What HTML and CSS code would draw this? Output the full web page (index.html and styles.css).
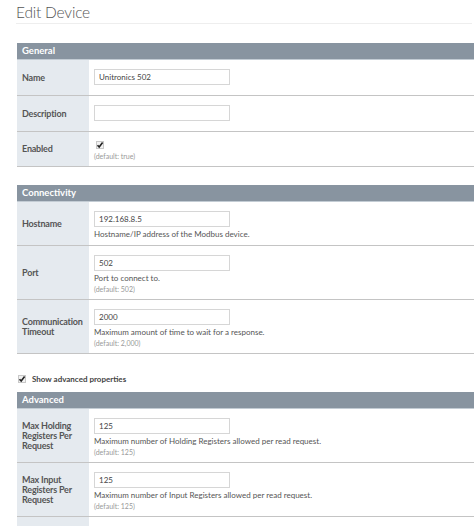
FILE: index.html
```html
<!DOCTYPE html>
<html>
<head>
<meta charset="utf-8">
<link rel="stylesheet" href="styles.css">
</head>
<body>
<div class="page">
  <h1 class="title">Edit Device</h1>

  <div class="section first">
    <div class="sec-head">General</div>
    <div class="row">
      <div class="label">Name</div>
      <div class="field"><div class="input">Unitronics 502</div></div>
    </div>
    <div class="row">
      <div class="label">Description</div>
      <div class="field"><div class="input"></div></div>
    </div>
    <div class="row short">
      <div class="label">Enabled</div>
      <div class="field">
        <span class="cb"><svg viewBox="0 0 8 8" width="8" height="8"><path d="M1.5 4.2 L3.2 6 L6.6 1.6" fill="none" stroke="#222" stroke-width="1.6"/></svg></span>
        <div class="default">(default: true)</div>
      </div>
    </div>
  </div>

  <div class="section">
    <div class="sec-head">Connectivity</div>
    <div class="row">
      <div class="label">Hostname</div>
      <div class="field">
        <div class="input">192.168.8.5</div>
        <div class="help">Hostname/IP address of the Modbus device.</div>
      </div>
    </div>
    <div class="row">
      <div class="label">Port</div>
      <div class="field">
        <div class="input">502</div>
        <div class="help">Port to connect to.</div>
        <div class="default">(default: 502)</div>
      </div>
    </div>
    <div class="row">
      <div class="label">Communication Timeout</div>
      <div class="field">
        <div class="input">2000</div>
        <div class="help">Maximum amount of time to wait for a response.</div>
        <div class="default">(default: 2,000)</div>
      </div>
    </div>
  </div>

  <div class="advanced-toggle">
    <span class="cb"><svg viewBox="0 0 8 8" width="8" height="8"><path d="M1.5 4.2 L3.2 6 L6.6 1.6" fill="none" stroke="#222" stroke-width="1.6"/></svg></span>
    <span class="toggle-text">Show advanced properties</span>
  </div>

  <div class="section adv">
    <div class="sec-head">Advanced</div>
    <div class="row">
      <div class="label">Max Holding Registers Per Request</div>
      <div class="field">
        <div class="input">125</div>
        <div class="help">Maximum number of Holding Registers allowed per read request.</div>
        <div class="default">(default: 125)</div>
      </div>
    </div>
    <div class="row">
      <div class="label">Max Input Registers Per Request</div>
      <div class="field">
        <div class="input">125</div>
        <div class="help">Maximum number of Input Registers allowed per read request.</div>
        <div class="default">(default: 125)</div>
      </div>
    </div>
    <div class="row">
      <div class="label">&nbsp;</div>
      <div class="field"><div class="input"></div></div>
    </div>
  </div>
</div>
</body>
</html>
```
FILE: styles.css
```css
html, body {
  margin: 0;
  padding: 0;
  background: #fff;
  overflow: hidden;
}
body {
  font-family: Lato, "Open Sans", sans-serif;
  color: #555;
}
.page {
  padding-left: 17px;
}
.title {
  margin: 0 2px 0 -1px;
  height: 24px;
  box-sizing: border-box;
  border-bottom: 1px solid #eeeeee;
  font-size: 15.5px;
  font-weight: 300;
  line-height: 24px;
  color: #555;
  letter-spacing: -0.2px;
}
.section.first {
  margin-top: 19px;
}
.section {
  margin-top: 18px;
}
.section.adv {
  margin-top: 0;
}
.sec-head {
  height: 17px;
  box-sizing: border-box;
  background: #8894a0;
  border-bottom: 1px solid #c3ccd4;
  color: #fff;
  font-weight: 700;
  font-size: 9.5px;
  line-height: 16px;
  padding-left: 5px;
}
.row {
  display: flex;
  min-height: 35px;
  border-bottom: 1px solid #c4c4c4;
}
.row.short {
  min-height: 33px;
}
.label {
  width: 72px;
  flex: none;
  box-sizing: border-box;
  background: #e5eaef;
  padding: 0 5px;
  display: flex;
  align-items: center;
  font-weight: 700;
  font-size: 9px;
  line-height: 10px;
  letter-spacing: -0.2px;
  color: #555;
}
.field {
  flex: 1;
  padding: 9px 5px 5px;
}
.input {
  width: 136px;
  height: 16px;
  box-sizing: border-box;
  border: 1px solid #d6d6d6;
  font-size: 8px;
  line-height: 14px;
  padding-left: 4px;
  color: #444;
  margin-bottom: 2px;
}
.help {
  font-size: 8px;
  line-height: 11px;
  color: #555;
  white-space: nowrap;
}
.default {
  font-size: 7px;
  line-height: 10px;
  color: #999;
}
.cb {
  display: block;
  width: 8px;
  height: 8px;
  box-sizing: border-box;
  border: 1px solid #c8c8c8;
  background: #f2f2f2;
  margin: 0 0 2px 2px;
}
.cb svg {
  display: block;
  margin: -1px;
}
.advanced-toggle {
  display: flex;
  align-items: center;
  height: 12px;
  margin: 19px 0 7px;
}
.advanced-toggle .cb {
  margin: 0 6px 0 1px;
}
.toggle-text {
  font-weight: 700;
  font-size: 8px;
  color: #444;
}
```
